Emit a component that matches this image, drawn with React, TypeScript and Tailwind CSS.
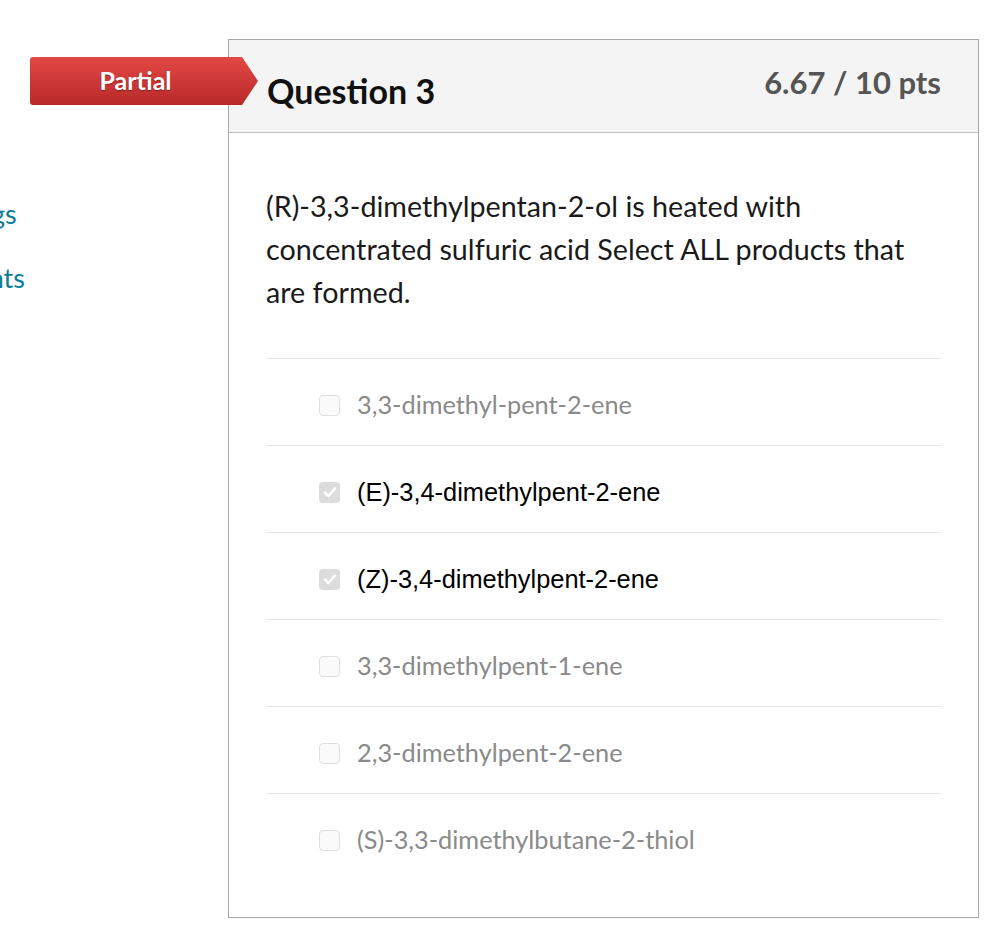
import React from "react";

const options: { label: string; checked: boolean }[] = [
  { label: "3,3-dimethyl-pent-2-ene", checked: false },
  { label: "(E)-3,4-dimethylpent-2-ene", checked: true },
  { label: "(Z)-3,4-dimethylpent-2-ene", checked: true },
  { label: "3,3-dimethylpent-1-ene", checked: false },
  { label: "2,3-dimethylpent-2-ene", checked: false },
  { label: "(S)-3,3-dimethylbutane-2-thiol", checked: false },
];

function Box({ checked }: { checked: boolean }) {
  if (checked) {
    return (
      <div className="w-[21px] h-[21px] rounded-[4px] bg-[#dcdcdc] flex items-center justify-center shrink-0">
        <svg width="14" height="12" viewBox="0 0 14 12">
          <path d="M2 6.5 L5.5 10 L12 2.5" fill="none" stroke="#ffffff" strokeWidth="2.6" strokeLinecap="round" strokeLinejoin="round" />
        </svg>
      </div>
    );
  }
  return <div className="w-[21px] h-[21px] rounded-[4px] border border-[#dedede] bg-[#fafafa] shrink-0" />;
}

export default function App() {
  return (
    <div className="w-[998px] h-[944px] bg-white overflow-hidden flex" style={{ fontFamily: "Lato, 'Noto Sans', sans-serif" }}>
      <div className="w-[228px] shrink-0 pt-[196px] flex flex-col gap-[28px]">
        <div className="w-full overflow-hidden flex justify-start">
          <div className="ml-[-78px] text-[27px] leading-[36px] text-[#0b7e95] whitespace-nowrap">Settings</div>
        </div>
        <div className="w-full overflow-hidden flex justify-start">
          <div className="ml-[-125px] text-[27px] leading-[36px] text-[#0b7e95] whitespace-nowrap">Assignments</div>
        </div>
      </div>
      <div className="mt-[39px] w-[751px] h-[879px] border border-[#a8a8a8] relative">
        <div className="absolute left-[-199px] top-[17px] flex items-center">
          <div className="w-[211px] h-[48px] rounded-l-[3px] bg-gradient-to-b from-[#e34844] to-[#b8282a] flex items-center justify-center">
            <span className="text-white text-[25px] font-bold" style={{ textShadow: "0 1px 1px rgba(0,0,0,0.35)" }}>Partial</span>
          </div>
          <svg width="17" height="48" viewBox="0 0 17 48" className="block">
            <defs>
              <linearGradient id="ag" x1="0" y1="0" x2="0" y2="1">
                <stop offset="0" stopColor="#e34844" />
                <stop offset="1" stopColor="#b8282a" />
              </linearGradient>
            </defs>
            <path d="M0 0 L1 0 L17 24 L1 48 L0 48 Z" fill="url(#ag)" />
          </svg>
        </div>
        <div className="h-[93px] bg-[#f4f4f4] border-b border-[#bdbdbd] flex items-start justify-between pl-[38px] pr-[37px]">
          <div className="mt-[29px] text-[34px] leading-[44px] font-bold text-[#111]">Question 3</div>
          <div className="mt-[22px] text-[31px] leading-[40px] font-bold text-[#555]">6.67 / 10 pts</div>
        </div>
        <div className="px-[37px] pt-[52px]">
          <p className="text-[28.7px] leading-[43px] text-[#1a1a1a]">
            (R)-3,3-dimethylpentan-2-ol is heated with concentrated sulfuric acid Select ALL products that are formed.
          </p>
          <div className="mt-[44px]">
            {options.map((o, i) => (
              <div key={i} className="h-[87px] pt-[6px] border-t border-[#e6e6e6] flex items-center pl-[53px] gap-[17px]">
                <Box checked={o.checked} />
                {o.checked ? (
                  <span className="text-[25.4px] text-black" style={{ fontFamily: "'Liberation Sans', Arial, sans-serif" }}>{o.label}</span>
                ) : (
                  <span className="text-[25.3px] text-[#8a8a8a]">{o.label}</span>
                )}
              </div>
            ))}
          </div>
        </div>
      </div>
    </div>
  );
}
